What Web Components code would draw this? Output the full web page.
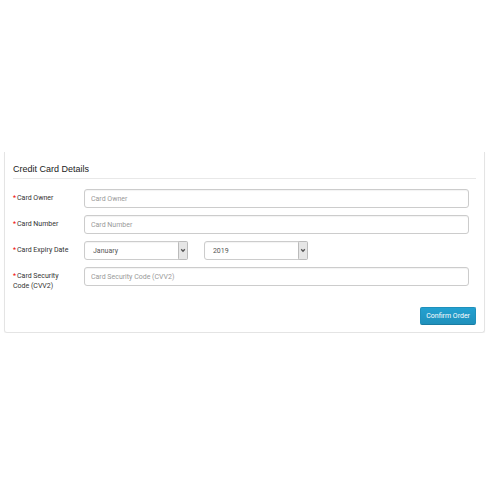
<!DOCTYPE html>
<html lang="en">
<head>
<meta charset="utf-8">
<title>Credit Card Details</title>
<style>
body { margin: 0; background: #fff; color: #333; font: 7px/10px Roboto, "Liberation Sans", sans-serif; }
</style>
</head>
<body>
<payment-panel></payment-panel>
<script>
class PaymentPanel extends HTMLElement {
  constructor() {
    super();
    this.attachShadow({ mode: "open" }).innerHTML = `
      <style>
        :host { display: block; padding: 152px 15px 0 4px; }
        section { border: 1px solid #e4e4e4; border-top: 0; border-radius: 0 0 3px 3px; box-shadow: 0 1px 1px #f4f4f4; padding: 11px 8px 7px; }
        h2 { margin: 0 0 10px; padding-bottom: 3px; border-bottom: 1px solid #e8e8e8; color: #222; font: 400 9px/12px "Liberation Sans", Arial, sans-serif; }
        form { display: grid; gap: 7px; }
        footer { display: flex; justify-content: flex-end; margin-top: 9px; }
      </style>
      <section>
        <h2>Credit Card Details</h2>
        <form>
          <card-field hint="Card Owner">Card Owner</card-field>
          <card-field hint="Card Number">Card Number</card-field>
          <expiry-field></expiry-field>
          <card-field hint="Card Security Code (CVV2)">Card Security <span>Code (CVV2)</span></card-field>
          <footer><confirm-button>Confirm Order</confirm-button></footer>
        </form>
      </section>`;
  }
}

const rowStyles = `
  :host { display: grid; grid-template-columns: 56px minmax(0, 1fr); column-gap: 15px; padding-right: 7px; align-items: start; }
  label { padding-top: 4px; }
  .required { color: #e00; margin-right: 1px; }
  input, select { box-sizing: border-box; width: 100%; height: 19px; margin: 0; border: 1px solid #ccc; border-radius: 3px; padding: 0 6px; background: #fff; box-shadow: inset 0 1px 1px #f3f3f3; color: #555; font: inherit; outline: 0; }
  input::placeholder { color: #999; opacity: 1; }`;

class CardField extends HTMLElement {
  connectedCallback() {
    this.attachShadow({ mode: "open" }).innerHTML = `
      <style>${rowStyles}</style>
      <label for="value"><span class="required">*</span><slot></slot></label>
      <input id="value" type="text" required placeholder="${this.getAttribute("hint")}">`;
  }
}

class ExpiryField extends HTMLElement {
  constructor() {
    super();
    this.attachShadow({ mode: "open" }).innerHTML = `
      <style>
        ${rowStyles}
        .pair { display: grid; grid-template-columns: 27% 27%; column-gap: 16px; }
        .drop { position: relative; }
        select { appearance: none; display: block; padding: 0 10px 0 8px; }
        svg { position: absolute; top: 0; right: 0; width: 10px; height: 19px; pointer-events: none; }
      </style>
      <label for="month"><span class="required">*</span>Card Expiry Date</label>
      <div class="pair">
        ${this.dropDown("month", "Expiry month", "January")}
        ${this.dropDown("year", "Expiry year", "2019")}
      </div>`;
  }
  dropDown(id, name, value) {
    return `<div class="drop">
      <select id="${id}" aria-label="${name}"><option>${value}</option></select>
      <svg viewBox="0 0 10 19" aria-hidden="true">
        <rect x=".5" y=".5" width="9" height="18" rx="1" fill="#e6e6e6" stroke="#bbb"/>
        <path d="M3.2 8.2L5 10.2L6.8 8.2" fill="none" stroke="#555" stroke-width="1.3"/>
      </svg>
    </div>`;
  }
}

class ConfirmButton extends HTMLElement {
  constructor() {
    super();
    this.attachShadow({ mode: "open" }).innerHTML = `
      <style>
        :host { display: block; }
        button { display: block; margin: 0; padding: 3px 5px; border: 1px solid #1f90bb; border-bottom-color: #1a7ca2; border-radius: 2px; background: linear-gradient(#23a1d1, #1f90bb); color: #fff; font: inherit; }
      </style>
      <button type="button"><slot></slot></button>`;
  }
}

customElements.define("card-field", CardField);
customElements.define("expiry-field", ExpiryField);
customElements.define("confirm-button", ConfirmButton);
customElements.define("payment-panel", PaymentPanel);
</script>
</body>
</html>
